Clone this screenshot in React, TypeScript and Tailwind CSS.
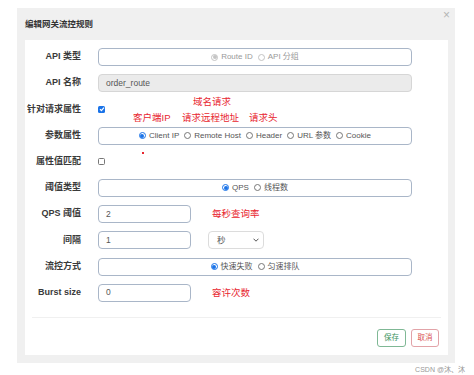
import React from 'react';

const FONT = "font-['Liberation_Sans','Noto_Sans_CJK_SC',sans-serif]";

function Radio({ checked, disabled, label }: { checked?: boolean; disabled?: boolean; label: string }) {
  const ring = disabled ? 'border-[#c4c4c4]' : checked ? 'border-[#1a73e8]' : 'border-[#777]';
  return (
    <span className={`flex items-center gap-[3px] ${disabled ? 'text-[#999]' : 'text-[#555]'}`}>
      <span className={`w-[7px] h-[7px] rounded-full border ${ring} flex items-center justify-center bg-white`}>
        {checked && <span className={`w-[4px] h-[4px] rounded-full ${disabled ? 'bg-[#c4c4c4]' : 'bg-[#1a73e8]'}`} />}
      </span>
      <span>{label}</span>
    </span>
  );
}

function Row({ label, children }: { label: string; children: React.ReactNode }) {
  return (
    <div className="flex items-center h-[18px]">
      <div className="w-[56px] text-right text-[9px] font-bold text-[#3a3a3a] whitespace-nowrap">{label}</div>
      <div className="ml-[17px] flex items-center flex-1">{children}</div>
    </div>
  );
}

function RadioBox({ children }: { children: React.ReactNode }) {
  return (
    <div className="w-[314px] h-[18px] rounded-[4px] border border-[#a9b6c8] bg-white flex items-center justify-center gap-[5px] text-[8px]">
      {children}
    </div>
  );
}

function TextBox({ value }: { value: string }) {
  return (
    <div className="w-[93px] h-[18px] rounded-[4px] border border-[#a9b6c8] bg-white flex items-center pl-[7px] text-[8.5px] text-[#555]">
      {value}
    </div>
  );
}

export default function App() {
  return (
    <div className={`w-[474px] h-[375px] bg-white pt-[8px] pl-[17px] ${FONT}`}>
      <div className="relative w-[438px] h-[355px] bg-[#f0f0f0] flex flex-col">
        <div className="h-[32px] pl-[8px] flex items-center text-[8.5px] font-bold text-[#333]">编辑网关流控规则</div>
        <span className="absolute right-[5px] top-[1px] text-[12px] text-[#b5b5b5] leading-none">×</span>

        {/* 表单卡片 */}
        <div className="relative ml-[8px] w-[423px] bg-white pt-[8px] pb-[8px]">
          <div className="flex flex-col gap-[8.2px]">
            <Row label="API 类型">
              <RadioBox>
                <Radio checked disabled label="Route ID" />
                <Radio disabled label="API 分组" />
              </RadioBox>
            </Row>
            <Row label="API 名称">
              <div className="w-[314px] h-[18px] rounded-[4px] border border-[#d6d6d6] bg-[#ebebeb] flex items-center pl-[7px] text-[8.5px] text-[#555]">
                order_route
              </div>
            </Row>
            <Row label="针对请求属性">
              <span className="w-[7px] h-[7px] rounded-[1.5px] bg-[#1a73e8] flex items-center justify-center">
                <svg width="6" height="6" viewBox="0 0 6 6"><path d="M1 3.2 L2.4 4.6 L5 1.6" stroke="white" strokeWidth="1.2" fill="none" /></svg>
              </span>
            </Row>
            <Row label="参数属性">
              <RadioBox>
                <Radio checked label="Client IP" />
                <Radio label="Remote Host" />
                <Radio label="Header" />
                <Radio label="URL 参数" />
                <Radio label="Cookie" />
              </RadioBox>
            </Row>
            <Row label="属性值匹配">
              <span className="w-[7px] h-[7px] rounded-[1.5px] border border-[#777] bg-white" />
            </Row>
            <Row label="阈值类型">
              <RadioBox>
                <Radio checked label="QPS" />
                <Radio label="线程数" />
              </RadioBox>
            </Row>
            <Row label="QPS 阈值">
              <TextBox value="2" />
              <span className="ml-[21px] text-[9.5px] text-[#e8262f]">每秒查询率</span>
            </Row>
            <Row label="间隔">
              <TextBox value="1" />
              <div className="ml-[17px] w-[56px] h-[18px] rounded-[4px] border border-[#dcdcdc] bg-white flex items-center justify-between pl-[8px] pr-[4px] text-[8.5px] text-[#555]">
                <span>秒</span>
                <svg width="6" height="4" viewBox="0 0 6 4"><path d="M0.5 0.7 L3 3.2 L5.5 0.7" stroke="#555" strokeWidth="1" fill="none" /></svg>
              </div>
            </Row>
            <Row label="流控方式">
              <RadioBox>
                <Radio checked label="快速失败" />
                <Radio label="匀速排队" />
              </RadioBox>
            </Row>
            <Row label="Burst size">
              <TextBox value="0" />
              <span className="ml-[21px] text-[9.5px] text-[#e8262f]">容许次数</span>
            </Row>
          </div>

          <div className="mt-[15px] mx-[7px] border-t border-[#f0f0f0]" />
          <div className="mt-[11px] pr-[9px] flex justify-end gap-[5px]">
            <button className="w-[29px] h-[18px] rounded-[3px] border border-[#7fb895] text-[7.5px] text-[#3a9360] bg-white">保存</button>
            <button className="w-[28px] h-[18px] rounded-[3px] border border-[#e2a3a8] text-[7.5px] text-[#d9534f] bg-white">取消</button>
          </div>

          {/* 红色批注 */}
          <span className="absolute left-[168px] top-[57px] text-[9.5px] text-[#e8262f] leading-none">域名请求</span>
          <span className="absolute left-[108px] top-[73px] text-[9.5px] text-[#e8262f] leading-none">客户端IP</span>
          <span className="absolute left-[157px] top-[73px] text-[9.5px] text-[#e8262f] leading-none">请求远程地址</span>
          <span className="absolute left-[224px] top-[73px] text-[9.5px] text-[#e8262f] leading-none">请求头</span>
          <span className="absolute left-[117px] top-[112px] w-[2px] h-[2px] bg-[#e8262f]" />
        </div>

        <div className="absolute right-[-10px] bottom-[-10px] text-[7px] text-[#999] leading-none">CSDN @沐、沐</div>
      </div>
    </div>
  );
}
